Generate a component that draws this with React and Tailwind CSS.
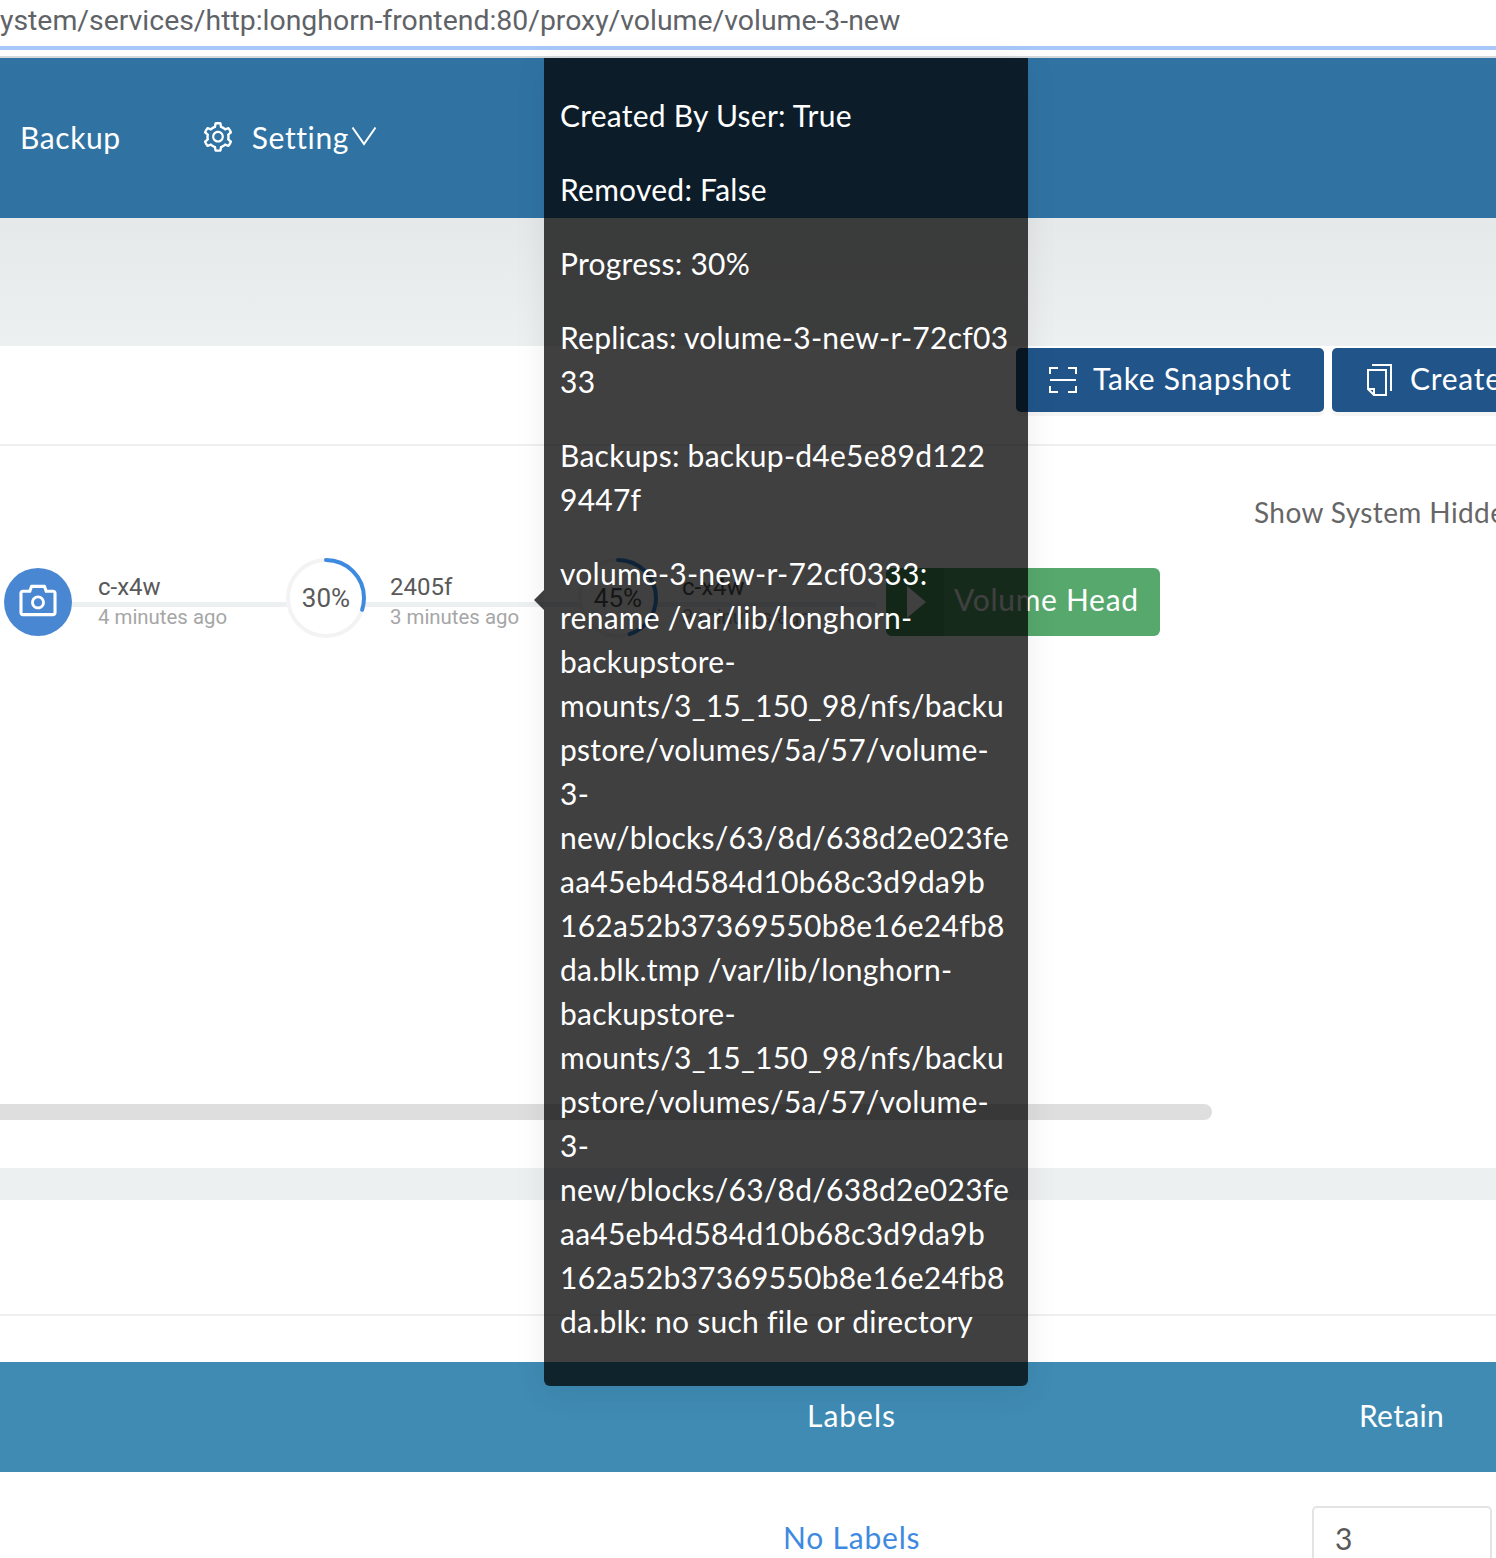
import React from "react";
import { AiOutlineSetting, AiOutlineCamera } from "react-icons/ai";

const sans = "font-['Lato','Noto_Sans',sans-serif]";
const rob = "font-['Roboto','Liberation_Sans',sans-serif]";

const paragraphs = [
  ["Created By User: True"],
  ["Removed: False"],
  ["Progress: 30%"],
  ["Replicas: volume-3-new-r-72cf03", "33"],
  ["Backups: backup-d4e5e89d122", "9447f"],
  [
    "volume-3-new-r-72cf0333:",
    "rename /var/lib/longhorn-",
    "backupstore-",
    "mounts/3_15_150_98/nfs/backu",
    "pstore/volumes/5a/57/volume-",
    "3-",
    "new/blocks/63/8d/638d2e023fe",
    "aa45eb4d584d10b68c3d9da9b",
    "162a52b37369550b8e16e24fb8",
    "da.blk.tmp /var/lib/longhorn-",
    "backupstore-",
    "mounts/3_15_150_98/nfs/backu",
    "pstore/volumes/5a/57/volume-",
    "3-",
    "new/blocks/63/8d/638d2e023fe",
    "aa45eb4d584d10b68c3d9da9b",
    "162a52b37369550b8e16e24fb8",
    "da.blk: no such file or directory",
  ],
];

function Ring({ pct, label }) {
  const r = 38;
  const c = 2 * Math.PI * r;
  return (
    <div className="relative w-[80px] h-[80px] shrink-0 bg-white rounded-full">
      <svg width="80" height="80" viewBox="0 0 80 80" className="-rotate-90">
        <circle cx="40" cy="40" r={r} fill="none" stroke="#f3f3f3" strokeWidth="4" />
        <circle
          cx="40"
          cy="40"
          r={r}
          fill="none"
          stroke="#3e8ae0"
          strokeWidth="4"
          strokeLinecap="round"
          strokeDasharray={`${(pct / 100) * c} ${c}`}
        />
      </svg>
      <div className={`absolute inset-0 flex items-center justify-center text-[26px] text-[#595959] ${rob}`}>{label}</div>
    </div>
  );
}

function NodeText({ title, time, cls }) {
  return (
    <div className={`flex flex-col ${rob} ${cls}`}>
      <span className="text-[24px] leading-[32px] text-[#595959]">{title}</span>
      <span className="text-[20.4px] leading-[28px] text-[#a6a6a6] whitespace-nowrap">{time}</span>
    </div>
  );
}

export default function App() {
  return (
    <div className={`relative w-[1496px] h-[1558px] overflow-hidden bg-white ${sans}`}>
      {/* address bar */}
      <div className={`h-[46px] flex items-center text-[28.4px] text-[#5f6368] whitespace-nowrap ${rob} pb-[4px]`}>
        ystem/services/http:longhorn-frontend:80/proxy/volume/volume-3-new
      </div>
      <div className="h-[4px] bg-[#a8c7fa]" />
      <div className="h-[6px] bg-white" />
      <div className="h-[2px] bg-[#d5d9dc]" />

      {/* header */}
      <div className="h-[160px] bg-[#3073a3] flex items-center pl-[20px] text-white text-[30px] tracking-[0.6px] pb-[2px]">
        <span>Backup</span>
        <AiOutlineSetting className="ml-[80px] text-[34px]" />
        <span className="ml-[17px]">Setting</span>
        <svg width="26" height="20" viewBox="0 0 26 20" fill="none" stroke="white" strokeWidth="2" className="ml-[2px] -mt-[2px]">
          <path d="M1.500 1.500L13 18L24.500 1.500" />
        </svg>
      </div>

      {/* breadcrumb band */}
      <div className="h-[128px] bg-gradient-to-b from-[#e6e9ea] to-[#edf0f1]" />

      {/* toolbar */}
      <div className="h-[100px] border-b-2 border-[#f0f0f0] flex items-start pl-[1016px] pt-[2px] gap-[8px] text-white text-[30px] tracking-[0.75px] whitespace-nowrap">
        <div className="w-[308px] h-[64px] shrink-0 bg-[#21558a] rounded-[5px] shadow-[0_4px_0_rgba(0,0,0,0.04)] flex items-center pl-[33px] pb-[4px]">
          <svg width="28" height="28" viewBox="0 0 28 28" fill="none" stroke="white" strokeWidth="2" className="mt-[4px]">
            <path d="M1 8V2H9M19 2H27V8M1 14H27M1 20V26H9M19 26H27V20" />
          </svg>
          <span className="ml-[16px]">Take Snapshot</span>
        </div>
        <div className="w-[300px] h-[64px] shrink-0 bg-[#21558a] rounded-[5px] shadow-[0_4px_0_rgba(0,0,0,0.04)] flex items-center pl-[34px] pb-[4px]">
          <svg width="26" height="32" viewBox="0 0 26 32" fill="none" stroke="white" strokeWidth="2" className="mt-[4px]">
            <path d="M6 1H25V27M2 6H20V31H8L2 25V6ZM2 25H8V31" />
          </svg>
          <span className="ml-[18px]">Create</span>
        </div>
      </div>

      {/* graph panel */}
      <div className="h-[724px] relative">
        <div className="h-[38px] mt-[46px] pl-[1254px] text-[28px] tracking-[0.4px] leading-[40px] text-[#666] whitespace-nowrap">Show System Hidden</div>

        <div className="relative flex items-center h-[80px] mt-[28px]">
          <div className="absolute left-[60px] w-[816px] top-[44px] h-[5px] bg-[#ecf0f1]" />
          <div className="relative ml-[4px] w-[68px] h-[68px] shrink-0 mt-[8px] rounded-full bg-[#4a87d3] flex items-center justify-center text-white text-[44px] pb-[2px]">
            <AiOutlineCamera />
          </div>
          <NodeText title="c-x4w" time="4 minutes ago" cls="relative ml-[26px] w-[188px] mt-[6px]" />
          <div className="relative"><Ring pct={30} label="30%" /></div>
          <NodeText title="2405f" time="3 minutes ago" cls="relative ml-[24px] w-[188px] mt-[6px]" />
          <div className="relative"><Ring pct={45} label="45%" /></div>
          <NodeText title="c-x4w" time="3 minutes ago" cls="relative ml-[24px] w-[204px] mt-[6px]" />
          <div className="relative w-[274px] h-[68px] shrink-0 mt-[8px] rounded-[6px] bg-[#57a86d] flex items-center text-white text-[30px] tracking-[0.7px] overflow-hidden whitespace-nowrap">
            <div className="w-[58px] h-full bg-[#4b9a61] flex items-center pl-[21px] shrink-0">
              <div className="w-0 h-0 border-y-[16px] border-y-transparent border-l-[19px] border-l-white" />
            </div>
            <span className="ml-[10px] -mt-[6px]">Volume Head</span>
          </div>
        </div>

        {/* horizontal scrollbar */}
        <div className="absolute left-0 top-[612px] w-[1212px] h-[16px] bg-[#dedede] rounded-r-full" />
      </div>

      <div className="absolute left-0 right-0 top-[1168px] h-[32px] bg-[#ecf0f1]" />
      <div className="absolute left-0 right-0 top-[1200px] h-[116px] bg-white border-b-2 border-[#f0f0f0]" />

      {/* table */}
      <div className="absolute left-0 right-0 top-[1362px] h-[110px] bg-[#3f8bb4] text-white text-[30px]">
        <div className="flex items-start pt-[31px] pl-[807px]">
          <span className="w-[552px] tracking-[1px]">Labels</span>
          <span className="tracking-[0.3px]">Retain</span>
        </div>
      </div>
      <div className="absolute left-[783px] top-[1515px] text-[30px] tracking-[0.8px] leading-[44px] text-[#3e8ae0]">No Labels</div>
      <div className="absolute left-[1312px] top-[1506px] w-[180px] h-[80px] border-2 border-[#e4e4e4] rounded-[5px] pl-[21px] pt-[8px] text-[30px] leading-[44px] text-[#595959]">3</div>

      {/* tooltip */}
      <div className="absolute left-[544px] top-[58px] w-[484px] h-[1328px] z-10 bg-black/75 rounded-b-[6px] text-white text-[30px] tracking-[0.25px] leading-[44px] pl-[16px] pt-[35px] flex flex-col gap-[30px] whitespace-nowrap shadow-[0_6px_32px_rgba(0,0,0,0.08)]">
        <div className="absolute -left-[10px] top-[532px] w-0 h-0 border-y-[10px] border-y-transparent border-r-[10px] border-r-black/75" />
        {paragraphs.map((lines, i) => (
          <div key={i}>
            {lines.map((l, j) => (
              <div key={j}>{l}</div>
            ))}
          </div>
        ))}
      </div>
    </div>
  );
}
